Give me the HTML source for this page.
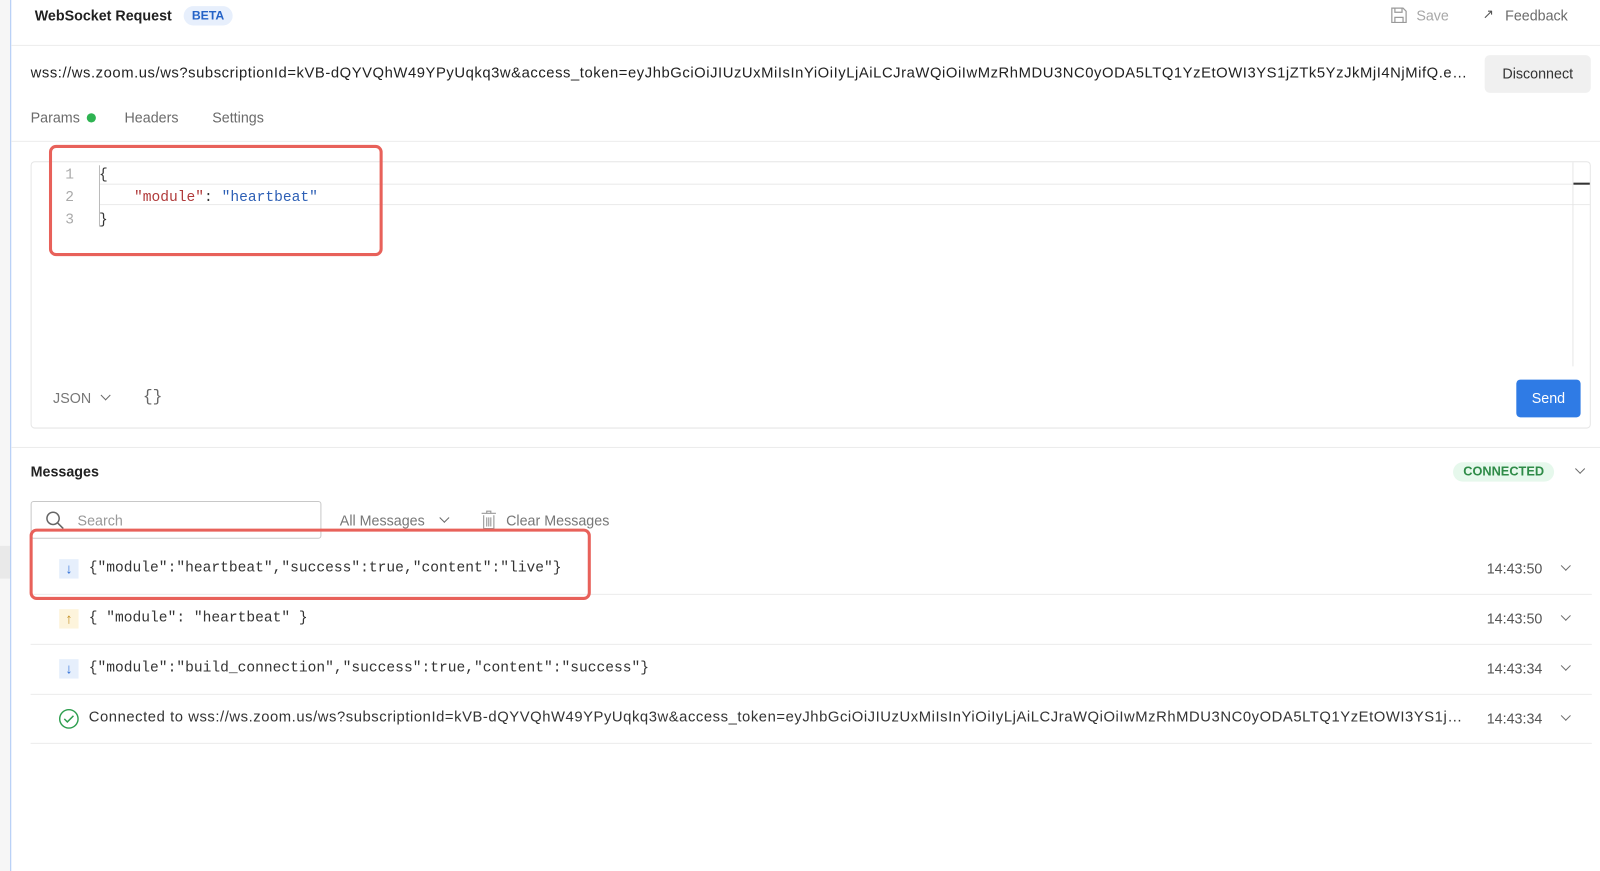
<!DOCTYPE html>
<html><head><meta charset="utf-8"><style>
*{box-sizing:border-box;margin:0;padding:0}
body{width:1600px;height:854px;background:#fff;overflow:hidden}
#w{width:1568px;height:837px;position:relative;transform:scale(1.0204);transform-origin:0 0;font-family:"Liberation Sans",sans-serif;color:#212121;font-size:14px}
.a{position:absolute;white-space:nowrap}
.mono{font-family:"Liberation Mono",monospace;font-size:14.3px}
.hl{position:absolute;height:1px;background:#ececec}
.box{position:absolute;border:3px solid #e8615a;border-radius:7px}
.chev{display:inline-block;width:7px;height:7px;border-right:1.3px solid #6b6b6b;border-bottom:1.3px solid #6b6b6b;transform:rotate(45deg)}
.wide{font-size:14.5px;letter-spacing:0.55px}
</style></head><body><div id="w">
<div class="a" style="left:0;top:0;width:10px;height:854px;background:#f6f6f6"></div>
<div class="a" style="left:0;top:535px;width:10px;height:32px;background:#e9e9e9"></div>
<div class="a" style="left:10px;top:0;width:1px;height:854px;background:#a9c7f5"></div>

<div class="a" style="left:34px;top:7px;font-size:14px;font-weight:bold;color:#212121">WebSocket Request</div>
<div class="a" style="left:180px;top:6px;height:19px;padding:0 8px;background:#e7effc;border-radius:10px;color:#2563c7;font-size:12px;font-weight:bold;line-height:19px">BETA</div>
<svg class="a" style="left:1362px;top:6px" width="18" height="18" viewBox="0 0 18 18" fill="none" stroke="#9a9a9a" stroke-width="1.2"><path d="M2 2h11l3 3v11H2z"/><path d="M5 2v4h7V2M5 16v-5h8v5"/></svg>
<div class="a" style="left:1388px;top:7px;color:#a8a8a8">Save</div>
<div class="a" style="left:1453px;top:6px;color:#555;font-size:13px">↗</div>
<div class="a" style="left:1475px;top:7px;color:#6b6b6b">Feedback</div>
<div class="hl" style="left:11px;top:44px;width:1589px"></div>

<div class="a wide" style="left:30px;top:64px;color:#212121;width:1412px;overflow:hidden;text-overflow:ellipsis">wss://ws.zoom.us/ws?subscriptionId=kVB-dQYVQhW49YPyUqkq3w&amp;access_token=eyJhbGciOiJIUzUxMiIsInYiOiIyLjAiLCJraWQiOiIwMzRhMDU3NC0yODA5LTQ1YzEtOWI3YS1jZTk5YzJkMjI4NjMifQ.eyJhbGciOiJIUzUxMiIsInYiOiIyLjAi</div>
<div class="a" style="left:1455px;top:54px;width:104px;height:37px;background:#f0f0f0;border-radius:5px;text-align:center;line-height:37px;color:#333">Disconnect</div>

<div class="a" style="left:30px;top:107px;color:#6b6b6b">Params</div>
<div class="a" style="left:85px;top:111px;width:9px;height:9px;border-radius:50%;background:#2eb351"></div>
<div class="a" style="left:122px;top:107px;color:#6b6b6b">Headers</div>
<div class="a" style="left:208px;top:107px;color:#6b6b6b">Settings</div>
<div class="hl" style="left:11px;top:138px;width:1589px"></div>

<div class="a" style="left:30px;top:158px;width:1529px;height:262px;border:1px solid #e6e6e6;border-radius:4px"></div>
<div class="a" style="left:98px;top:180px;width:1460px;height:21px;border-top:1px solid #eaeaea;border-bottom:1px solid #eaeaea"></div>
<div class="a" style="left:1541px;top:159px;width:1px;height:200px;background:#e6e6e6"></div>
<div class="a" style="left:1542px;top:179px;width:16px;height:2px;background:#333"></div>
<div class="a mono" style="left:64px;top:161px;color:#aaa;line-height:22px">1<br>2<br>3</div>
<div class="a mono" style="left:97px;top:161px;line-height:22px;color:#333">{<br>&nbsp;&nbsp;&nbsp;&nbsp;<span style="color:#b03a3a">"module"</span>: <span style="color:#2d5fb5">"heartbeat"</span><br>}</div>
<div class="a" style="left:97px;top:162px;width:1px;height:60px;background:#bbb"></div>
<div class="box" style="left:48px;top:142px;width:327px;height:109px"></div>

<div class="a" style="left:52px;top:382px;color:#777">JSON</div>
<span class="a chev" style="left:100px;top:384px"></span>
<div class="a mono" style="left:140px;top:380px;color:#666;font-size:16px">{}</div>
<div class="a" style="left:1486px;top:372px;width:63px;height:37px;background:#2f7be5;border-radius:4px;color:#fff;text-align:center;line-height:37px">Send</div>
<div class="hl" style="left:11px;top:438px;width:1589px"></div>

<div class="a" style="left:30px;top:454px;font-weight:bold;color:#222">Messages</div>
<div class="a" style="left:1424px;top:453px;height:19px;padding:0 10px;background:#e6f8ec;border-radius:10px;color:#2e8b47;font-size:12.5px;font-weight:bold;line-height:19px">CONNECTED</div>
<span class="a chev" style="left:1545px;top:456px"></span>

<div class="a" style="left:30px;top:491px;width:285px;height:37px;border:1px solid #c8c8c8;border-radius:3px"></div>
<svg class="a" style="left:44px;top:500px" width="20" height="20" viewBox="0 0 20 20" fill="none" stroke="#666" stroke-width="1.5"><circle cx="8" cy="8" r="6"/><path d="M12.5 12.5L18 18"/></svg>
<div class="a" style="left:76px;top:502px;color:#999">Search</div>
<div class="a" style="left:333px;top:502px;color:#777">All Messages</div>
<span class="a chev" style="left:432px;top:504px"></span>
<svg class="a" style="left:471px;top:500px" width="16" height="19" viewBox="0 0 16 19" fill="none" stroke="#999" stroke-width="1.1"><path d="M1 3h14M6 3V1h4v2M3 5v13h10V5M6 7v9M8 7v9M10 7v9"/></svg>
<div class="a" style="left:496px;top:502px;color:#777">Clear Messages</div>

<div class="a" style="left:58px;top:548px;width:19px;height:19px;background:#e6effc;color:#2f6fd6;text-align:center;line-height:19px;font-size:14px">↓</div>
<div class="a mono" style="left:87px;top:549px;color:#333">{"module":"heartbeat","success":true,"content":"live"}</div>
<div class="a" style="left:1457px;top:549px;color:#555">14:43:50</div>
<span class="a chev" style="left:1531px;top:551px"></span>
<div class="hl" style="left:30px;top:582px;width:1530px"></div>

<div class="a" style="left:58px;top:597px;width:19px;height:19px;background:#fdf4dc;color:#c08a1a;text-align:center;line-height:19px;font-size:14px">↑</div>
<div class="a mono" style="left:87px;top:598px;color:#333">{ "module": "heartbeat" }</div>
<div class="a" style="left:1457px;top:598px;color:#555">14:43:50</div>
<span class="a chev" style="left:1531px;top:600px"></span>
<div class="hl" style="left:30px;top:631px;width:1530px"></div>

<div class="a" style="left:58px;top:646px;width:19px;height:19px;background:#e6effc;color:#2f6fd6;text-align:center;line-height:19px;font-size:14px">↓</div>
<div class="a mono" style="left:87px;top:647px;color:#333">{"module":"build_connection","success":true,"content":"success"}</div>
<div class="a" style="left:1457px;top:647px;color:#555">14:43:34</div>
<span class="a chev" style="left:1531px;top:649px"></span>
<div class="hl" style="left:30px;top:680px;width:1530px"></div>

<svg class="a" style="left:57px;top:694px" width="21" height="21" viewBox="0 0 21 21" fill="none" stroke="#2e9e4f" stroke-width="1.4"><circle cx="10.5" cy="10.5" r="9"/><path d="M6 10.5l3 3 6-6"/></svg>
<div class="a wide" style="left:87px;top:695px;color:#333;width:1352px;overflow:hidden;text-overflow:ellipsis">Connected to wss://ws.zoom.us/ws?subscriptionId=kVB-dQYVQhW49YPyUqkq3w&amp;access_token=eyJhbGciOiJIUzUxMiIsInYiOiIyLjAiLCJraWQiOiIwMzRhMDU3NC0yODA5LTQ1YzEtOWI3YS1jZTk5YzJkMjI4NjMifQ.eyJhbGci</div>
<div class="a" style="left:1457px;top:696px;color:#555">14:43:34</div>
<span class="a chev" style="left:1531px;top:698px"></span>
<div class="hl" style="left:30px;top:728px;width:1530px"></div>

<div class="box" style="left:29px;top:518px;width:550px;height:70px"></div>
</div></body></html>
